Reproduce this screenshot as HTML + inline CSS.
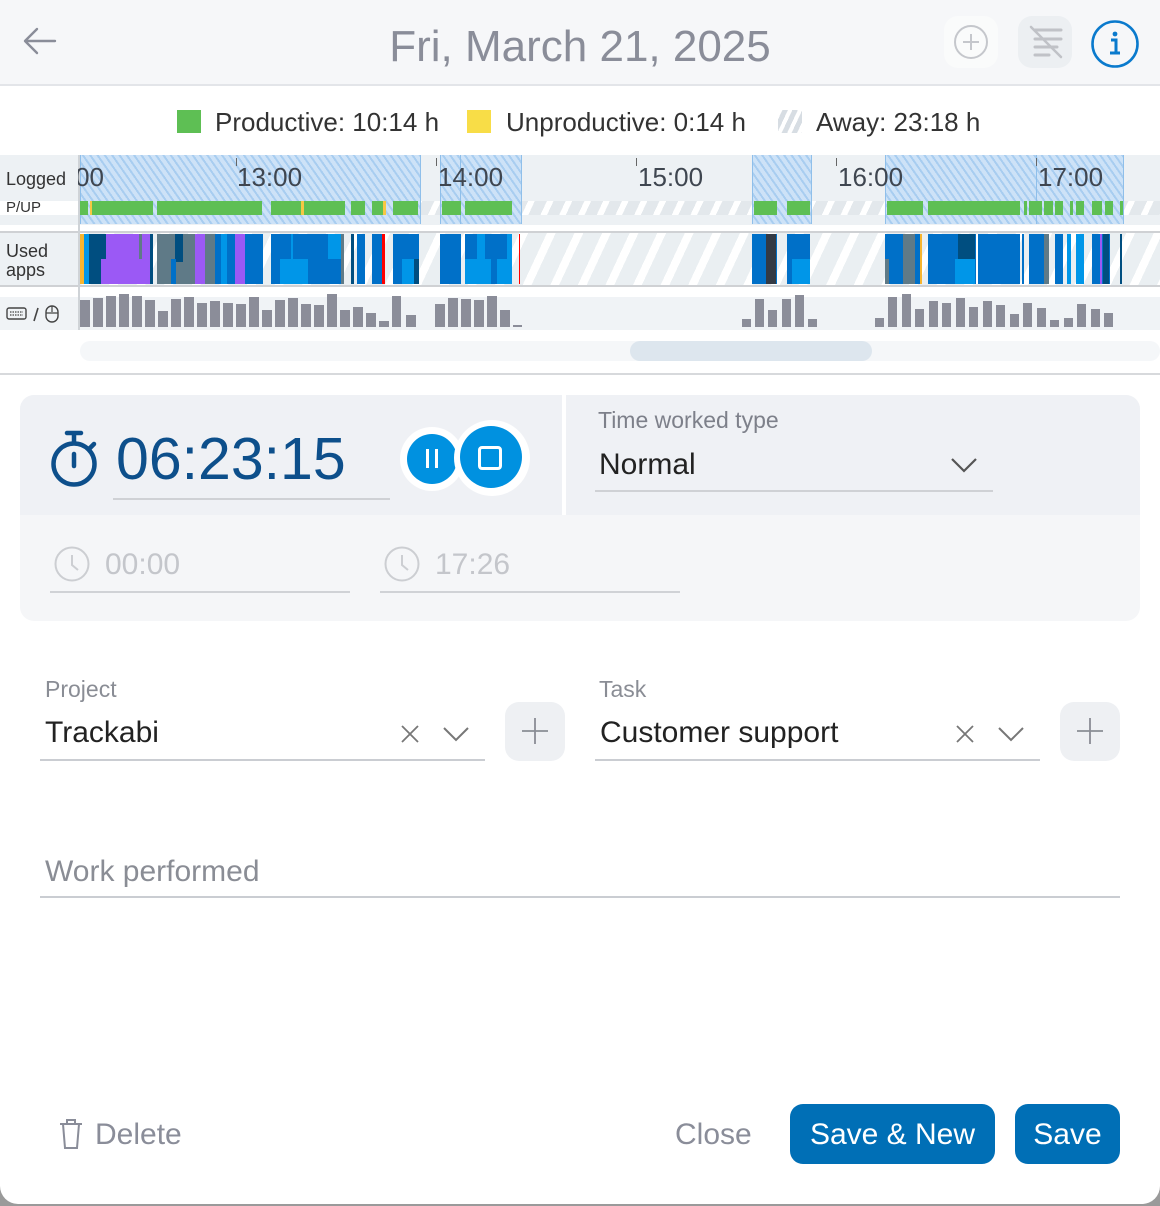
<!DOCTYPE html>
<html><head><meta charset="utf-8"><style>
*{margin:0;padding:0;box-sizing:border-box}
body{width:1160px;height:1206px;background:#9a9a9a;font-family:"Liberation Sans",sans-serif;position:relative;overflow:hidden}
.card{position:absolute;left:0;top:0;width:1160px;height:1204px;background:#fff;border-radius:0 0 18px 18px;overflow:hidden}
.a{position:absolute}
.t{position:absolute;white-space:nowrap;line-height:1}
.hb{background:repeating-linear-gradient(55deg,#cde2f7 0 4px,#a8cdf0 4px 6px);border-left:1px solid #8fbfea;border-right:1px solid #8fbfea}
.g{background:#5ebf54;top:201px;height:14px;position:absolute}
.y{background:#f7c744;top:201px;height:14px;position:absolute}
.ap{position:absolute;top:234px;height:50px}
.b{position:absolute;background:#8b8d99;width:10px;bottom:877px}
.tick{position:absolute;top:158px;width:1px;height:8px;background:#666}
.tl{position:absolute;top:164px;font-size:26px;color:#3f4650;line-height:1}
</style></head><body><div class="card">

<!-- header -->
<div class="a" style="left:0;top:0;width:1160px;height:86px;background:#f6f7f9;border-bottom:2px solid #e3e5e9"></div>
<svg class="a" style="left:22px;top:27px" width="36" height="28" viewBox="0 0 36 28"><path d="M33 14H4M15 2L3 14l12 12" fill="none" stroke="#8a8d99" stroke-width="2.4" stroke-linecap="round" stroke-linejoin="round"/></svg>
<div class="t" style="left:0;width:1160px;text-align:center;top:25px;font-size:44px;color:#8a8d99">Fri, March 21, 2025</div>
<div class="a" style="left:944px;top:16px;width:54px;height:52px;border-radius:14px;background:#fafbfb"></div>
<svg class="a" style="left:953px;top:24px" width="36" height="36"><circle cx="18" cy="18" r="16" fill="none" stroke="#c5c7cc" stroke-width="2"/><path d="M18 10v16M10 18h16" stroke="#c5c7cc" stroke-width="2"/></svg>
<div class="a" style="left:1018px;top:16px;width:54px;height:52px;border-radius:14px;background:#eceff2"></div>
<svg class="a" style="left:1026px;top:24px" width="40" height="36"><g stroke="#c0c2c7" stroke-width="3" stroke-linecap="round"><path d="M9 6h26M9 15h26M9 23h22M9 31h14"/><path d="M5 3l30 30" stroke-width="2.5"/></g></svg>
<svg class="a" style="left:1090px;top:19px" width="50" height="50"><circle cx="25" cy="25" r="22.5" fill="none" stroke="#0a7acd" stroke-width="2.6"/><circle cx="25" cy="15" r="2.4" fill="#0a7acd"/><path d="M21 21h5v13M20 34h10" fill="none" stroke="#0a7acd" stroke-width="3"/></svg>

<!-- legend -->
<div class="a" style="left:177px;top:110px;width:24px;height:23px;background:#5ebf54"></div>
<div class="t" style="left:215px;top:109px;font-size:26px;color:#333">Productive: 10:14 h</div>
<div class="a" style="left:467px;top:110px;width:24px;height:23px;background:#f8dd47"></div>
<div class="t" style="left:506px;top:109px;font-size:26px;color:#333">Unproductive: 0:14 h</div>
<div class="a" style="left:778px;top:110px;width:24px;height:23px;background:repeating-linear-gradient(115deg,#fff 0 4px,#d7dde3 4px 9px)"></div>
<div class="t" style="left:816px;top:109px;font-size:26px;color:#333">Away: 23:18 h</div>

<!-- timeline rows -->
<div class="a" style="left:0;top:155px;width:1160px;height:46px;background:#edf1f4"></div>
<div class="a" style="left:78px;top:201px;width:1082px;height:14px;background:repeating-linear-gradient(115deg,#fff 0 6px,#e3e8ec 6px 17px)"></div>
<div class="a" style="left:0;top:215px;width:1160px;height:10px;background:#edf1f4"></div>
<div class="a" style="left:0;top:231px;width:1160px;height:2px;background:#cfd1d4"></div>
<div class="a" style="left:0;top:233px;width:78px;height:52px;background:#edf1f4"></div>
<div class="a" style="left:78px;top:233px;width:1082px;height:52px;background:repeating-linear-gradient(115deg,#fff 0 8px,#eaeff2 8px 25px)"></div>
<div class="a" style="left:0;top:285px;width:1160px;height:2px;background:#cfd1d4"></div>
<div class="a" style="left:0;top:297px;width:1160px;height:33px;background:#f0f3f6"></div>
<div class="a" style="left:78px;top:155px;width:2px;height:175px;background:#cfd3d7"></div>
<div class="t" style="left:6px;top:170px;font-size:18px;color:#333">Logged</div>
<div class="t" style="left:6px;top:200px;font-size:15px;color:#333">P/UP</div>
<div class="t" style="left:6px;top:242px;font-size:18px;color:#333;line-height:19px">Used<br>apps</div>
<svg class="a" style="left:6px;top:305px" width="56" height="18"><rect x="1" y="3" width="19" height="11" rx="2" fill="none" stroke="#444" stroke-width="1.4"/><path d="M4 7h13M4 10h13" stroke="#444" stroke-width="1.2" stroke-dasharray="1.5 1"/><path d="M28 16l4-13" stroke="#444" stroke-width="1.6"/><rect x="40" y="1" width="12" height="16" rx="6" fill="none" stroke="#444" stroke-width="1.4"/><path d="M46 1v6M40 8h12" stroke="#444" stroke-width="1.2"/></svg>

<!-- logged hatched -->
<div class="a hb" style="left:80px;top:155px;width:341px;height:69px"></div>
<div class="a hb" style="left:440px;top:155px;width:82px;height:69px"></div>
<div class="a hb" style="left:752px;top:155px;width:60px;height:69px"></div>
<div class="a hb" style="left:885px;top:155px;width:239px;height:69px"></div>
<div class="a" style="left:1036px;top:155px;width:1px;height:69px;background:#8fbfea"></div>
<div class="a" style="left:460px;top:155px;width:1px;height:69px;background:#8fbfea"></div>

<div class="tick" style="left:236px"></div><div class="tick" style="left:436px"></div><div class="tick" style="left:636px"></div><div class="tick" style="left:836px"></div><div class="tick" style="left:1036px"></div>
<div class="tl" style="left:78px;width:26px;overflow:hidden;direction:rtl">00</div>
<div class="tl" style="left:237px">13:00</div>
<div class="tl" style="left:438px">14:00</div>
<div class="tl" style="left:638px">15:00</div>
<div class="tl" style="left:838px">16:00</div>
<div class="tl" style="left:1038px">17:00</div>

<!-- P/UP -->
<div class="g" style="left:80px;width:8px"></div>
<div class="g" style="left:91px;width:62px"></div><div class="y" style="left:90px;width:2px"></div>
<div class="g" style="left:157px;width:105px"></div>
<div class="g" style="left:271px;width:74px"></div><div class="y" style="left:301px;width:3px"></div>
<div class="g" style="left:351px;width:14px"></div>
<div class="g" style="left:372px;width:13px"></div><div class="y" style="left:383px;width:3px"></div>
<div class="g" style="left:393px;width:25px"></div>
<div class="g" style="left:442px;width:19px"></div>
<div class="g" style="left:465px;width:47px"></div>
<div class="g" style="left:754px;width:23px"></div>
<div class="g" style="left:787px;width:23px"></div>
<div class="g" style="left:887px;width:36px"></div>
<div class="g" style="left:928px;width:92px"></div>
<div class="g" style="left:1024px;width:3px"></div>
<div class="g" style="left:1029px;width:13px"></div>
<div class="g" style="left:1044px;width:9px"></div>
<div class="g" style="left:1055px;width:8px"></div>
<div class="g" style="left:1070px;width:3px"></div>
<div class="g" style="left:1076px;width:8px"></div>
<div class="g" style="left:1092px;width:10px"></div>
<div class="g" style="left:1105px;width:8px"></div>
<div class="g" style="left:1120px;width:3px"></div>

<!-- apps -->
<div class="ap" style="left:80px;width:4px;background:#f7b52f"></div>
<div class="ap" style="left:84px;width:5px;background:#0096e8"></div>
<div class="ap" style="left:89px;width:12px;background:#004e80"></div>
<div class="ap" style="left:101px;width:49px;background:#9b59f5"></div>
<div class="ap" style="left:101px;width:5px;height:25px;background:#004e80"></div>
<div class="ap" style="left:139px;width:3px;height:25px;background:#5f7a87"></div>
<div class="ap" style="left:150px;width:3px;background:#004e80"></div>
<div class="ap" style="left:157px;width:38px;background:#5f7a87"></div>
<div class="ap" style="left:175px;width:8px;height:28px;background:#004e80"></div>
<div class="ap" style="left:171px;width:5px;top:259px;height:25px;background:#0070c8"></div>
<div class="ap" style="left:195px;width:10px;background:#9b59f5"></div>
<div class="ap" style="left:205px;width:10px;background:#5f7a87"></div>
<div class="ap" style="left:215px;width:20px;background:#0070c8"></div>
<div class="ap" style="left:221px;width:6px;background:#0096e8"></div>
<div class="ap" style="left:235px;width:10px;background:#9b59f5"></div>
<div class="ap" style="left:245px;width:18px;background:#0070c8"></div>
<div class="ap" style="left:271px;width:20px;background:#0070c8"></div>
<div class="ap" style="left:280px;width:28px;top:259px;height:25px;background:#0096e8"></div>
<div class="ap" style="left:291px;width:2px;background:#0096e8"></div>
<div class="ap" style="left:293px;width:35px;height:25px;background:#0070c8"></div>
<div class="ap" style="left:308px;width:36px;top:259px;height:25px;background:#0070c8"></div>
<div class="ap" style="left:328px;width:14px;background:#0096e8;height:25px"></div>
<div class="ap" style="left:341px;width:3px;background:#5f7a87"></div>
<div class="ap" style="left:351px;width:3px;background:#004e80"></div>
<div class="ap" style="left:357px;width:8px;background:#0070c8"></div>
<div class="ap" style="left:372px;width:10px;background:#0070c8"></div>
<div class="ap" style="left:382px;width:3px;background:#f00"></div>
<div class="ap" style="left:393px;width:26px;background:#0070c8"></div>
<div class="ap" style="left:402px;width:16px;top:259px;height:25px;background:#0096e8"></div>
<div class="ap" style="left:414px;width:5px;top:259px;height:25px;background:#004e80"></div>
<div class="ap" style="left:440px;width:21px;background:#0070c8"></div>
<div class="ap" style="left:465px;width:47px;background:#0096e8"></div>
<div class="ap" style="left:465px;width:12px;height:25px;background:#0070c8"></div>
<div class="ap" style="left:485px;width:22px;height:25px;background:#0070c8"></div>
<div class="ap" style="left:491px;width:6px;top:259px;height:25px;background:#0070c8"></div>
<div class="ap" style="left:519px;width:1px;background:#f00"></div>
<div class="ap" style="left:752px;width:25px;background:#0070c8"></div>
<div class="ap" style="left:766px;width:10px;background:#333a45"></div>
<div class="ap" style="left:787px;width:23px;background:#0070c8"></div>
<div class="ap" style="left:792px;width:18px;top:259px;height:25px;background:#0096e8"></div>
<div class="ap" style="left:885px;width:35px;background:#0070c8"></div>
<div class="ap" style="left:903px;width:12px;background:#5f7a87"></div>
<div class="ap" style="left:885px;width:4px;top:259px;height:25px;background:#5f7a87"></div>
<div class="ap" style="left:920px;width:2px;background:#f7b52f"></div>
<div class="ap" style="left:928px;width:92px;background:#0070c8"></div>
<div class="ap" style="left:955px;width:20px;top:259px;height:25px;background:#0096e8"></div>
<div class="ap" style="left:958px;width:17px;height:25px;background:#004e80"></div>
<div class="ap" style="left:976px;width:2px;background:#fff"></div>
<div class="ap" style="left:1022px;width:2px;background:#0070c8"></div>
<div class="ap" style="left:1029px;width:20px;background:#0070c8"></div>
<div class="ap" style="left:1044px;width:5px;background:#5f7a87"></div>
<div class="ap" style="left:1055px;width:8px;background:#0070c8"></div>
<div class="ap" style="left:1067px;width:4px;background:#0096e8"></div>
<div class="ap" style="left:1076px;width:8px;background:#0096e8"></div>
<div class="ap" style="left:1092px;width:18px;background:#0070c8"></div>
<div class="ap" style="left:1103px;width:6px;background:#004e80"></div>
<div class="ap" style="left:1100px;width:2px;background:#9b59f5"></div>
<div class="ap" style="left:1120px;width:2px;background:#004e80"></div>

<!-- activity bars -->
<div class="b" style="left:80px;height:27px"></div><div class="b" style="left:93px;height:29px"></div><div class="b" style="left:106px;height:31px"></div><div class="b" style="left:119px;height:33px"></div><div class="b" style="left:132px;height:31px"></div><div class="b" style="left:145px;height:27px"></div><div class="b" style="left:158px;height:16px"></div><div class="b" style="left:171px;height:28px"></div><div class="b" style="left:184px;height:30px"></div><div class="b" style="left:197px;height:24px"></div><div class="b" style="left:210px;height:26px"></div><div class="b" style="left:223px;height:24px"></div><div class="b" style="left:236px;height:23px"></div><div class="b" style="left:249px;height:30px"></div><div class="b" style="left:262px;height:17px"></div><div class="b" style="left:275px;height:27px"></div><div class="b" style="left:288px;height:29px"></div><div class="b" style="left:301px;height:23px"></div><div class="b" style="left:314px;height:22px"></div><div class="b" style="left:327px;height:33px"></div><div class="b" style="left:340px;height:17px"></div><div class="b" style="left:353px;height:20px"></div><div class="b" style="left:366px;height:14px"></div><div class="b" style="left:379px;height:6px"></div><div class="b" style="left:392px;height:31px;width:9px"></div><div class="b" style="left:406px;height:12px"></div>
<div class="b" style="left:435px;height:23px"></div><div class="b" style="left:448px;height:29px"></div><div class="b" style="left:461px;height:28px"></div><div class="b" style="left:474px;height:27px"></div><div class="b" style="left:487px;height:31px"></div><div class="b" style="left:500px;height:17px"></div><div class="b" style="left:513px;height:2px;width:9px"></div>
<div class="b" style="left:742px;height:8px;width:9px"></div><div class="b" style="left:755px;height:28px;width:9px"></div><div class="b" style="left:768px;height:17px;width:9px"></div><div class="b" style="left:782px;height:28px;width:9px"></div><div class="b" style="left:795px;height:32px;width:9px"></div><div class="b" style="left:808px;height:8px;width:9px"></div>
<div class="b" style="left:875px;height:9px;width:9px"></div><div class="b" style="left:888px;height:30px;width:9px"></div><div class="b" style="left:902px;height:33px;width:9px"></div><div class="b" style="left:915px;height:18px;width:9px"></div><div class="b" style="left:929px;height:26px;width:9px"></div><div class="b" style="left:942px;height:24px;width:9px"></div><div class="b" style="left:956px;height:29px;width:9px"></div><div class="b" style="left:969px;height:20px;width:9px"></div><div class="b" style="left:983px;height:26px;width:9px"></div><div class="b" style="left:996px;height:22px;width:9px"></div><div class="b" style="left:1010px;height:13px;width:9px"></div><div class="b" style="left:1023px;height:24px;width:9px"></div><div class="b" style="left:1037px;height:19px;width:9px"></div><div class="b" style="left:1050px;height:7px;width:9px"></div><div class="b" style="left:1064px;height:9px;width:9px"></div><div class="b" style="left:1077px;height:23px;width:9px"></div><div class="b" style="left:1091px;height:18px;width:9px"></div><div class="b" style="left:1104px;height:14px;width:9px"></div>

<!-- scrollbar -->
<div class="a" style="left:80px;top:341px;width:1080px;height:20px;border-radius:10px;background:#f5f7f9"></div>
<div class="a" style="left:630px;top:341px;width:242px;height:20px;border-radius:10px;background:#dde6ee"></div>
<div class="a" style="left:0;top:373px;width:1160px;height:2px;background:#d7d9dc"></div>

<!-- timer card -->
<div class="a" style="left:20px;top:395px;width:1120px;height:226px;border-radius:14px;background:#f5f6f8;overflow:hidden">
  <div class="a" style="left:0;top:0;width:1120px;height:120px;background:#eff1f5"></div>
  <div class="a" style="left:542px;top:0;width:4px;height:120px;background:#fff"></div>
</div>
<svg class="a" style="left:50px;top:428px" width="54" height="62"><path d="M17 5h14M24 5v9" stroke="#0d4f8b" stroke-width="4.5" stroke-linecap="round"/><circle cx="24" cy="36" r="20.5" fill="none" stroke="#0d4f8b" stroke-width="4.5"/><path d="M24 26v12" stroke="#0d4f8b" stroke-width="4.5" stroke-linecap="round"/><path d="M40 20l4-4" stroke="#0d4f8b" stroke-width="4.5" stroke-linecap="round"/></svg>
<div class="t" style="left:116px;top:430px;font-size:59px;color:#0d4f8b">06:23:15</div>
<div class="a" style="left:113px;top:498px;width:277px;height:2px;background:#cfd1d5"></div>
<div class="a" style="left:400px;top:427px;width:64px;height:64px;border-radius:50%;background:#fff"></div>
<div class="a" style="left:407px;top:434px;width:50px;height:50px;border-radius:50%;background:#0091e0"></div>
<div class="a" style="left:426px;top:449px;width:3px;height:19px;background:#fff"></div>
<div class="a" style="left:435px;top:449px;width:3px;height:19px;background:#fff"></div>
<div class="a" style="left:454px;top:420px;width:76px;height:76px;border-radius:50%;background:#fff"></div>
<div class="a" style="left:460px;top:426px;width:62px;height:62px;border-radius:50%;background:#0091e0"></div>
<div class="a" style="left:478px;top:446px;width:24px;height:24px;border:3px solid #fff;border-radius:4px"></div>
<div class="t" style="left:598px;top:409px;font-size:23px;color:#7d808a">Time worked type</div>
<div class="t" style="left:599px;top:450px;font-size:30px;color:#222">Normal</div>
<svg class="a" style="left:950px;top:456px" width="28" height="18"><path d="M2 3l12 12L26 3" fill="none" stroke="#555" stroke-width="2.2"/></svg>
<div class="a" style="left:595px;top:490px;width:398px;height:2px;background:#cfd1d5"></div>
<svg class="a" style="left:53px;top:545px" width="38" height="38"><circle cx="19" cy="19" r="16.5" fill="none" stroke="#ccced2" stroke-width="2"/><path d="M19 10v10l6 5" fill="none" stroke="#ccced2" stroke-width="2"/></svg>
<div class="t" style="left:105px;top:550px;font-size:30px;color:#c4c6cb">00:00</div>
<div class="a" style="left:50px;top:591px;width:300px;height:2px;background:#d0d2d6"></div>
<svg class="a" style="left:383px;top:545px" width="38" height="38"><circle cx="19" cy="19" r="16.5" fill="none" stroke="#ccced2" stroke-width="2"/><path d="M19 10v10l6 5" fill="none" stroke="#ccced2" stroke-width="2"/></svg>
<div class="t" style="left:435px;top:550px;font-size:30px;color:#c4c6cb">17:26</div>
<div class="a" style="left:380px;top:591px;width:300px;height:2px;background:#d0d2d6"></div>

<!-- project/task -->
<div class="t" style="left:45px;top:678px;font-size:23px;color:#8a8d95">Project</div>
<div class="t" style="left:45px;top:718px;font-size:30px;color:#222">Trackabi</div>
<svg class="a" style="left:400px;top:724px" width="20" height="20"><path d="M2 2l16 16M18 2L2 18" stroke="#777" stroke-width="1.8"/></svg>
<svg class="a" style="left:442px;top:726px" width="28" height="16"><path d="M2 2l12 12L26 2" fill="none" stroke="#777" stroke-width="2"/></svg>
<div class="a" style="left:40px;top:759px;width:445px;height:2px;background:#cacdd2"></div>
<div class="a" style="left:505px;top:702px;width:60px;height:59px;border-radius:14px;background:#eef0f3"></div>
<svg class="a" style="left:521px;top:717px" width="28" height="28"><path d="M14 1v26M1 14h26" stroke="#8a8d95" stroke-width="1.8"/></svg>
<div class="t" style="left:599px;top:678px;font-size:23px;color:#8a8d95">Task</div>
<div class="t" style="left:600px;top:718px;font-size:30px;color:#222">Customer support</div>
<svg class="a" style="left:955px;top:724px" width="20" height="20"><path d="M2 2l16 16M18 2L2 18" stroke="#777" stroke-width="1.8"/></svg>
<svg class="a" style="left:997px;top:726px" width="28" height="16"><path d="M2 2l12 12L26 2" fill="none" stroke="#777" stroke-width="2"/></svg>
<div class="a" style="left:595px;top:759px;width:445px;height:2px;background:#cacdd2"></div>
<div class="a" style="left:1060px;top:702px;width:60px;height:59px;border-radius:14px;background:#eef0f3"></div>
<svg class="a" style="left:1076px;top:717px" width="28" height="28"><path d="M14 1v26M1 14h26" stroke="#8a8d95" stroke-width="1.8"/></svg>

<div class="t" style="left:45px;top:857px;font-size:30px;color:#8a8d95">Work performed</div>
<div class="a" style="left:40px;top:896px;width:1080px;height:2px;background:#cacdd2"></div>

<!-- footer -->
<svg class="a" style="left:58px;top:1118px" width="26" height="32"><path d="M2 6h22M9 6V2h8v4M5 6l2 24h12l2-24" fill="none" stroke="#8a8d99" stroke-width="2"/></svg>
<div class="t" style="left:95px;top:1120px;font-size:30px;color:#8a8d99">Delete</div>
<div class="t" style="left:675px;top:1120px;font-size:30px;color:#8a8d99">Close</div>
<div class="a" style="left:790px;top:1104px;width:205px;height:60px;border-radius:13px;background:#006fb6"></div>
<div class="t" style="left:790px;width:205px;text-align:center;top:1120px;font-size:30px;color:#fff">Save &amp; New</div>
<div class="a" style="left:1015px;top:1104px;width:105px;height:60px;border-radius:13px;background:#006fb6"></div>
<div class="t" style="left:1015px;width:105px;text-align:center;top:1120px;font-size:30px;color:#fff">Save</div>
</div></body></html>
